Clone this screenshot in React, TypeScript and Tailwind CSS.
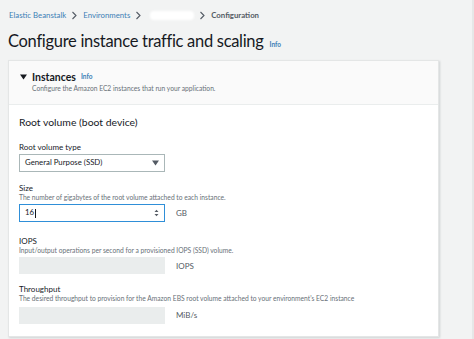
import { ReactNode } from 'react';

const font = { fontFamily: 'Lato, "Noto Sans", Arial, sans-serif' };

function Chevron() {
  return (
    <svg width="7" height="9" viewBox="0 0 7 9" className="mx-[5px] text-[#545b64]">
      <path d="M1.5 1l3.5 3.5L1.5 8" fill="none" stroke="currentColor" strokeWidth="1.1" />
    </svg>
  );
}

function Field({
  label,
  desc,
  children,
  className = '',
}: {
  label: string;
  desc?: string;
  children: ReactNode;
  className?: string;
}) {
  return (
    <div className={className}>
      <div className="text-[8px] leading-[10px] text-[#16191f]">{label}</div>
      {desc && <div className="text-[6.7px] leading-[9px] text-[#687078]">{desc}</div>}
      <div className="mt-[2px] flex items-center">{children}</div>
    </div>
  );
}

function Unit({ children }: { children: ReactNode }) {
  return <span className="ml-[11px] text-[8px] text-[#545b64]">{children}</span>;
}

export default function App() {
  return (
    <div style={font} className="h-[339px] w-[474px] overflow-hidden bg-[#f2f3f3]">
      <div className="flex h-full">
        <div className="flex w-[439px] flex-col pb-[2px]">
          {/* breadcrumb */}
          <nav className="flex h-[20px] items-end pl-[9px] text-[7.8px] leading-[10px]">
            <span className="text-[#3d7fb6]">Elastic Beanstalk</span>
            <Chevron />
            <span className="text-[#3d7fb6]">Environments</span>
            <Chevron />
            <span className="ml-[3px] h-[9px] w-[44px] rounded-[4px] bg-white blur-[1px]" />
            <Chevron />
            <span className="font-bold text-[#545b64]">Configuration</span>
          </nav>
          <h1 className="mt-[10px] flex items-baseline pl-[8px] text-[16.5px] leading-[22px] tracking-[-0.3px] text-[#16191f]">
            Configure instance traffic and scaling
            <span className="ml-[6px] text-[6.5px] font-bold leading-none tracking-normal text-[#3d7fb6]">Info</span>
          </h1>

          {/* card */}
          <div className="ml-[8px] mt-[8px] flex-1 border border-[#e4e6e6] bg-white shadow-[1px_1px_2px_rgba(0,28,36,0.15)]">
            <div className="h-[44px] border-b border-[#eaeded] bg-[#fafafa] pl-[11px] pt-[9px]">
              <div className="flex items-center">
                <svg width="7" height="6" viewBox="0 0 7 6" className="mr-[5px]">
                  <path d="M0 0.5h7L3.5 5.5z" fill="#16191f" />
                </svg>
                <span className="text-[10.5px] font-bold leading-[14px] text-[#16191f]">Instances</span>
                <span className="ml-[5px] text-[6.5px] font-bold text-[#3d7fb6]">Info</span>
              </div>
              <div className="ml-[12px] text-[6.7px] leading-[9px] text-[#687078]">
                Configure the Amazon EC2 instances that run your application.
              </div>
            </div>

            <div className="pl-[10px]">
              <div className="mt-[10px] text-[10.4px] leading-[14px] text-[#16191f]">Root volume (boot device)</div>

              <Field label="Root volume type" className="mt-[13px]">
                <div className="flex h-[18px] w-[146px] items-center justify-between border border-[#aab7b8] px-[5px] text-[7.8px] text-[#16191f]">
                  <span>General Purpose (SSD)</span>
                  <svg width="7" height="6" viewBox="0 0 7 6">
                    <path d="M0 0.5h7L3.5 5.5z" fill="#545b64" />
                  </svg>
                </div>
              </Field>

              <Field
                label="Size"
                desc="The number of gigabytes of the root volume attached to each instance."
                className="mt-[11px]"
              >
                <div className="flex h-[18px] w-[146px] items-center justify-between border-[1.5px] border-[#2f8fd8] px-[5px] text-[7.8px] text-[#16191f]">
                  <span>
                    16<span className="ml-[1px] inline-block h-[9px] w-[1px] bg-[#16191f] align-middle" />
                  </span>
                  <svg width="5" height="8" viewBox="0 0 5 8">
                    <path d="M0.5 3L2.5 0.8L4.5 3z M0.5 5L2.5 7.2L4.5 5z" fill="#545b64" />
                  </svg>
                </div>
                <Unit>GB</Unit>
              </Field>

              <Field
                label="IOPS"
                desc="Input/output operations per second for a provisioned IOPS (SSD) volume."
                className="mt-[14px]"
              >
                <div className="h-[17px] w-[146px] bg-[#eaeded]" />
                <Unit>IOPS</Unit>
              </Field>

              <Field
                label="Throughput"
                desc="The desired throughput to provision for the Amazon EBS root volume attached to your environment's EC2 instance"
                className="mt-[10px]"
              >
                <div className="mt-[2px] h-[17px] w-[146px] bg-[#eaeded]" />
                <Unit>MiB/s</Unit>
              </Field>
            </div>
          </div>
        </div>
        <div className="flex-1" />
        <div className="w-[2px] bg-[#e6e7e7]" />
      </div>
    </div>
  );
}
